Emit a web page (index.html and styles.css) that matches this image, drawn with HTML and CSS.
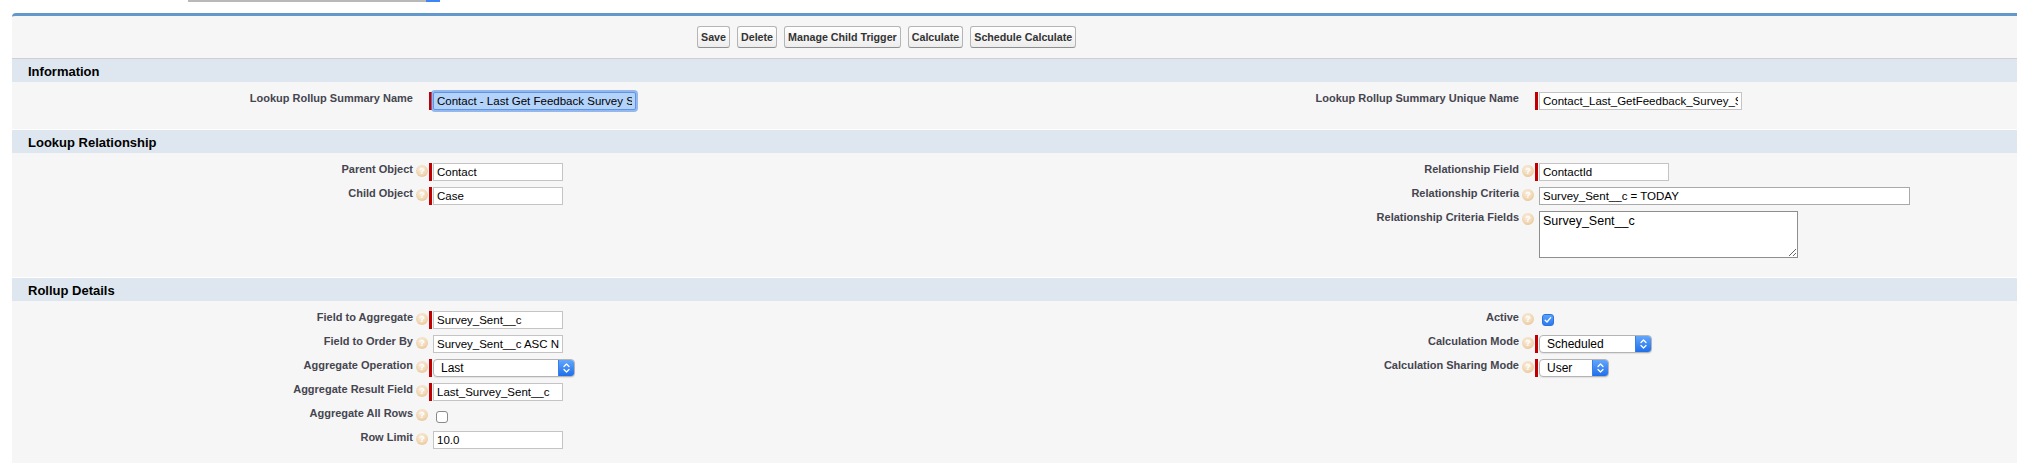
FILE: index.html
```html
<!DOCTYPE html>
<html>
<head>
<meta charset="utf-8">
<title>Lookup Rollup Summary</title>
<link rel="stylesheet" href="styles.css">
</head>
<body>
<div class="topbar"><span class="edge-gray"></span><span class="edge-blue"></span></div>
<div class="page-block">
  <div class="pb-buttons">
    <button class="btn">Save</button>
    <button class="btn">Delete</button>
    <button class="btn">Manage Child Trigger</button>
    <button class="btn">Calculate</button>
    <button class="btn">Schedule Calculate</button>
  </div>

  <section class="pb-section first">
    <h3 class="pb-subheader">Information</h3>
    <div class="pb-grid">
      <div class="lbl">Lookup Rollup Summary Name</div>
      <div class="data"><span class="help-slot"></span><span class="req"></span><input class="txt w203 focused" value="Contact - Last Get Feedback Survey Sent"></div>
      <div class="lbl">Lookup Rollup Summary Unique Name</div>
      <div class="data"><span class="help-slot"></span><span class="req"></span><input class="txt w203" value="Contact_Last_GetFeedback_Survey_Sent"></div>
    </div>
  </section>

  <section class="pb-section">
    <h3 class="pb-subheader">Lookup Relationship</h3>
    <div class="pb-grid">
      <div class="lbl">Parent Object</div>
      <div class="data"><span class="help">?</span><span class="req"></span><input class="txt w130" value="Contact"></div>
      <div class="lbl">Relationship Field</div>
      <div class="data"><span class="help">?</span><span class="req"></span><input class="txt w130" value="ContactId"></div>

      <div class="lbl">Child Object</div>
      <div class="data"><span class="help">?</span><span class="req"></span><input class="txt w130" value="Case"></div>
      <div class="lbl">Relationship Criteria</div>
      <div class="data"><span class="help">?</span><span class="req none"></span><input class="txt w371 dark" value="Survey_Sent__c = TODAY"></div>

      <div class="lbl"></div>
      <div class="data"></div>
      <div class="lbl">Relationship Criteria Fields</div>
      <div class="data"><span class="help">?</span><span class="req none"></span><textarea class="area">Survey_Sent__c</textarea></div>
    </div>
  </section>

  <section class="pb-section">
    <h3 class="pb-subheader">Rollup Details</h3>
    <div class="pb-grid">
      <div class="lbl">Field to Aggregate</div>
      <div class="data"><span class="help">?</span><span class="req"></span><input class="txt w130" value="Survey_Sent__c"></div>
      <div class="lbl">Active</div>
      <div class="data"><span class="help">?</span><span class="req none"></span><span class="cb checked"><svg viewBox="0 0 12 12" width="10" height="10"><path d="M2.6 6.2 L4.8 8.4 L9.2 3.2" fill="none" stroke="#fff" stroke-width="1.6" stroke-linecap="round" stroke-linejoin="round"/></svg></span></div>

      <div class="lbl">Field to Order By</div>
      <div class="data"><span class="help">?</span><span class="req none"></span><input class="txt w130" value="Survey_Sent__c ASC NULLS LAST"></div>
      <div class="lbl">Calculation Mode</div>
      <div class="data"><span class="help">?</span><span class="req"></span><div class="sel w113"><span class="sel-text">Scheduled</span><span class="sel-arrows"><svg viewBox="0 0 9 14" width="9" height="14"><path d="M2 5.5 L4.5 3 L7 5.5 M2 8.5 L4.5 11 L7 8.5" fill="none" stroke="#fff" stroke-width="1.3" stroke-linecap="round" stroke-linejoin="round"/></svg></span></div></div>

      <div class="lbl">Aggregate Operation</div>
      <div class="data"><span class="help">?</span><span class="req"></span><div class="sel w142"><span class="sel-text">Last</span><span class="sel-arrows"><svg viewBox="0 0 9 14" width="9" height="14"><path d="M2 5.5 L4.5 3 L7 5.5 M2 8.5 L4.5 11 L7 8.5" fill="none" stroke="#fff" stroke-width="1.3" stroke-linecap="round" stroke-linejoin="round"/></svg></span></div></div>
      <div class="lbl">Calculation Sharing Mode</div>
      <div class="data"><span class="help">?</span><span class="req"></span><div class="sel w70"><span class="sel-text">User</span><span class="sel-arrows"><svg viewBox="0 0 9 14" width="9" height="14"><path d="M2 5.5 L4.5 3 L7 5.5 M2 8.5 L4.5 11 L7 8.5" fill="none" stroke="#fff" stroke-width="1.3" stroke-linecap="round" stroke-linejoin="round"/></svg></span></div></div>

      <div class="lbl">Aggregate Result Field</div>
      <div class="data"><span class="help">?</span><span class="req"></span><input class="txt w130" value="Last_Survey_Sent__c"></div>
      <div class="lbl"></div>
      <div class="data"></div>

      <div class="lbl">Aggregate All Rows</div>
      <div class="data"><span class="help">?</span><span class="req none"></span><span class="cb low"></span></div>
      <div class="lbl"></div>
      <div class="data"></div>

      <div class="lbl">Row Limit</div>
      <div class="data"><span class="help">?</span><span class="req none"></span><input class="txt w130" value="10.0"></div>
      <div class="lbl"></div>
      <div class="data"></div>
    </div>
  </section>
</div>
</body>
</html>
```

FILE: styles.css
```css
html, body {
  margin: 0;
  padding: 0;
  background: #ffffff;
  font-family: "Liberation Sans", Arial, sans-serif;
  overflow: hidden;
}

.topbar {
  height: 13px;
  padding-left: 188px;
  display: flex;
  align-items: flex-start;
}
.edge-gray {
  width: 238px;
  height: 2px;
  background: #b9b9b9;
}
.edge-blue {
  width: 14px;
  height: 2px;
  background: #3d86f4;
}

.page-block {
  margin-left: 12px;
  background: #f6f6f6;
  border-top: 3px solid #6298cc;
  border-top-left-radius: 4px;
  min-height: 460px;
}

.pb-buttons {
  height: 42px;
  box-sizing: content-box;
  padding-left: 685px;
  display: flex;
  align-items: center;
  gap: 7px;
  border-bottom: 1px solid #cfcfcf;
}
.btn {
  height: 22px;
  box-sizing: border-box;
  margin: 0;
  padding: 0 3px;
  border: 1px solid #b5b5b5;
  border-bottom-color: #8f8f8f;
  border-radius: 3px;
  background: linear-gradient(#ffffff, #ededed);
  font-family: "Liberation Sans", Arial, sans-serif;
  font-size: 10.7px;
  font-weight: bold;
  color: #333333;
  line-height: 20px;
}

.pb-section {
  border-top: 1px solid #ffffff;
}
.pb-section.first {
  border-top: none;
}
.pb-subheader {
  margin: 0;
  height: 23px;
  box-sizing: border-box;
  padding: 2px 0 0 16px;
  line-height: 21px;
  font-size: 13px;
  font-weight: bold;
  color: #000000;
  background: #dee7ef;
}

.pb-grid {
  display: grid;
  grid-template-columns: 401px 705px 401px 1fr;
  grid-auto-rows: minmax(18px, auto);
  row-gap: 6px;
  padding: 10px 0 19px;
}

.lbl {
  text-align: right;
  font-size: 11px;
  font-weight: bold;
  line-height: 13px;
  color: #45454f;
}

.data {
  display: flex;
  align-items: flex-start;
  padding-left: 3px;
}

.help,
.help-slot {
  flex: none;
  width: 12px;
  height: 12px;
  margin-top: 2px;
}
.help {
  border-radius: 50%;
  background: radial-gradient(circle at 45% 35%, #fbf0e3 0%, #f0d6b3 55%, #e0b983 100%);
  color: #ffffff;
  font-size: 9px;
  font-weight: bold;
  line-height: 12px;
  text-align: center;
}

.req {
  flex: none;
  width: 3px;
  height: 18px;
  margin-left: 1px;
  margin-right: 1px;
  background: #c00000;
}
.req.none {
  background: transparent;
}

.txt {
  box-sizing: border-box;
  height: 18px;
  margin: 0;
  padding: 0 3px;
  border: 1px solid #c4c4c4;
  background: #ffffff;
  font-family: "Liberation Sans", Arial, sans-serif;
  font-size: 11.5px;
  color: #000000;
  outline: none;
}
.txt.dark {
  border-color: #a9a9a9;
}
.txt.focused {
  background: #b3d3fb;
  border-color: #5f95e6;
  border-radius: 2px;
  box-shadow: 0 0 0 2px rgba(96, 150, 232, 0.65);
}
.w130 { width: 130px; }
.w203 { width: 203px; }
.w371 { width: 371px; }

.area {
  box-sizing: border-box;
  width: 259px;
  height: 47px;
  margin: 0;
  padding: 2px 3px;
  border: 1px solid #8e8e8e;
  background: #ffffff;
  font-family: "Liberation Sans", Arial, sans-serif;
  font-size: 12.5px;
  color: #000000;
  resize: both;
  outline: none;
}

.sel {
  display: flex;
  box-sizing: border-box;
  height: 18px;
  border: 1px solid #b4b4b4;
  border-radius: 4px;
  background: #ffffff;
  box-shadow: 0 1px 1px rgba(0, 0, 0, 0.08);
  font-size: 12px;
  line-height: 16px;
  color: #000000;
  overflow: hidden;
}
.sel-text {
  flex: 1;
  padding-left: 7px;
}
.sel-arrows {
  flex: none;
  width: 15px;
  display: flex;
  align-items: center;
  justify-content: center;
  background: linear-gradient(#62a6fc, #1f6fe9);
  border-left: 1px solid #3a7fe6;
}
.w142 { width: 142px; }
.w113 { width: 113px; }
.w70 { width: 70px; }

.cb {
  flex: none;
  box-sizing: border-box;
  width: 12px;
  height: 12px;
  margin: 3px 0 0 3px;
  border: 1px solid #8a8a8a;
  border-radius: 3px;
  background: #ffffff;
  display: flex;
  align-items: center;
  justify-content: center;
}
.cb.low {
  margin-top: 4px;
}
.cb.checked {
  border-color: #2b72dc;
  background: linear-gradient(#5aa2fb, #2a7af0);
}
```
